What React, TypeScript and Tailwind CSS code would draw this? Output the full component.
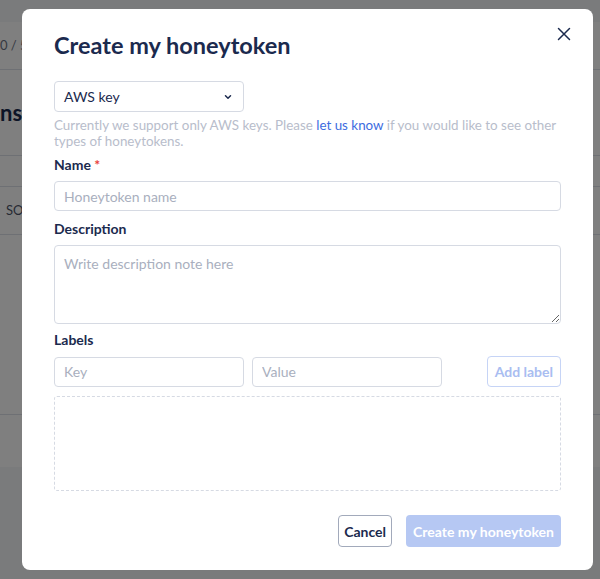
import React from "react";

const font = { fontFamily: "Lato, 'Open Sans', sans-serif" };

const Background = () => (
  <div className="h-[579px] w-[600px] bg-white text-[#1b2a4e]">
    <div className="h-[22px] bg-[#f5f6f8]" />
    <div className="flex h-[48px] items-center border-b border-[#dde1e8] text-[13px] text-[#6b7385]">
      0 / 5
    </div>
    <div className="flex h-[85px] items-center text-[22px] font-bold">ns</div>
    <div className="h-[32px] border-y border-[#dde1e8]" />
    <div className="flex h-[48px] items-center border-b border-[#dde1e8] pl-[6px] text-[13px] text-[#4b5468]">
      SOURCE
    </div>
    <div className="h-[180px] border-b border-[#dde1e8]" />
    <div className="h-[52px]" />
    <div className="h-[112px] bg-[#f5f6f8]" />
  </div>
);

const inputCls =
  "h-[30px] rounded-[4px] border border-[#d6dae3] bg-white px-[9px] text-[14px] text-[#1b2a4e] placeholder-[#a9afbe] outline-none";

export default function App() {
  return (
    <div className="relative h-[579px] w-[600px] overflow-hidden" style={font}>
      <Background />
      <div className="absolute inset-0 bg-black/50" />
      <div className="absolute left-[22px] top-[9px] flex h-[561px] w-[571px] flex-col rounded-[8px] bg-white px-[32px] pt-[20px] text-[#1b2a4e]">
        <button className="absolute right-[22px] top-[18px] text-[#1b2a4e]">
          <svg width="14" height="14" viewBox="0 0 14 14" fill="none" stroke="currentColor" strokeWidth="1.5" strokeLinecap="round">
            <path d="M1.5 1.5l11 11M12.5 1.5l-11 11" />
          </svg>
        </button>
        <h1 className="text-[23.5px] font-bold leading-[32px] text-[#1b2a4e]">Create my honeytoken</h1>

        <div className="mt-[20px] flex h-[31px] w-[190px] items-center justify-between rounded-[4px] border border-[#d6dae3] pl-[9px] pr-[10px] text-[14px]">
          <span>AWS key</span>
          <svg width="10" height="10" viewBox="0 0 10 10" fill="none" stroke="currentColor" strokeWidth="1.5" strokeLinecap="round" strokeLinejoin="round">
            <path d="M2.5 3.8L5 6.2l2.5-2.4" />
          </svg>
        </div>
        <p className="mt-[5px] text-[13.4px] leading-[16px] text-[#b8bdcb]">
          Currently we support only AWS keys. Please <span className="text-[#3d6ce0]">let us know</span> if you would like to see other types of honeytokens.
        </p>

        <label className="mt-[7px] text-[14px] font-bold leading-[18px]">
          Name <span className="text-[#e8413a]">*</span>
        </label>
        <input className={`${inputCls} mt-[7px] w-full border-[#b9c0ce]`} placeholder="Honeytoken name" />

        <label className="mt-[9px] text-[14px] font-bold leading-[18px]">Description</label>
        <textarea
          className="mt-[7px] h-[79px] w-full resize-y rounded-[4px] border border-[#d6dae3] px-[9px] py-[9px] text-[14px] leading-[18px] placeholder-[#a9afbe] outline-none"
          placeholder="Write description note here"
        />

        <label className="mt-[7px] text-[14px] font-bold leading-[18px]">Labels</label>
        <div className="mt-[7px] flex items-center">
          <input className={`${inputCls} w-[190px]`} placeholder="Key" />
          <input className={`${inputCls} ml-[8px] w-[190px]`} placeholder="Value" />
          <button className="ml-auto h-[31px] rounded-[4px] border border-[#c6d4f6] px-[7px] text-[14px] font-bold text-[#a9bdf1]">
            Add label
          </button>
        </div>
        <div className="mt-[9px] h-[95px] w-full rounded-[3px] border border-dashed border-[#d6dae3]" />

        <div className="mt-[24px] flex justify-end gap-[14px]">
          <button className="h-[32px] rounded-[4px] border border-[#a2aabb] px-[5px] text-[14px] font-bold">Cancel</button>
          <button className="h-[32px] rounded-[4px] bg-[#b6c8f3] px-[7px] text-[14px] font-bold text-white">
            Create my honeytoken
          </button>
        </div>
      </div>
    </div>
  );
}
